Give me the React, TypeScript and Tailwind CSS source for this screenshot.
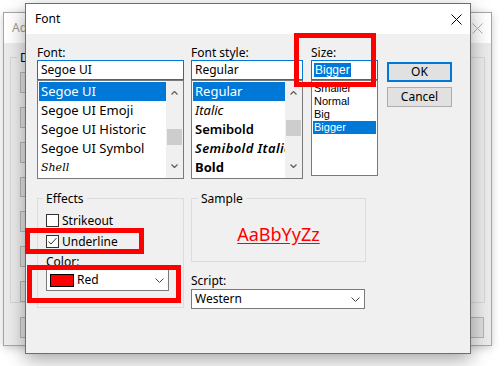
const UI = "font-['Noto_Sans',sans-serif]"

function ScrollArrow({ down }: { down?: boolean }) {
  return (
    <svg width="7" height="4" viewBox="0 0 7 4" className="block">
      <polyline
        points={down ? '0.5,0.5 3.5,3.5 6.5,0.5' : '0.5,3.5 3.5,0.5 6.5,3.5'}
        fill="none"
        stroke="#606060"
        strokeWidth="1.3"
      />
    </svg>
  )
}

function Chevron() {
  return (
    <svg width="9" height="5" viewBox="0 0 9 5" className="block">
      <polyline points="0.5,0.5 4.5,4.5 8.5,0.5" fill="none" stroke="#444" strokeWidth="1" />
    </svg>
  )
}

function CloseX({ color }: { color: string }) {
  return (
    <svg width="11" height="11" viewBox="0 0 11 11" className="block">
      <path d="M0.5 0.5 L10.5 10.5 M10.5 0.5 L0.5 10.5" stroke={color} strokeWidth="1" />
    </svg>
  )
}

function Scrollbar({ thumbTop }: { thumbTop: number }) {
  return (
    <div className="relative flex h-full w-[17px] shrink-0 flex-col items-center justify-between bg-[#f0f0f0] py-[10px]">
      <ScrollArrow />
      <div className="absolute left-[1px] h-[16px] w-[15px] bg-[#cdcdcd]" style={{ top: thumbTop }} />
      <ScrollArrow down />
    </div>
  )
}

function Checkbox({ checked, label }: { checked?: boolean; label: string }) {
  return (
    <div className="flex h-[13px] items-center gap-[3px]">
      <div className="h-[13px] w-[13px] border border-[#333] bg-white">
        {checked && (
          <svg width="11" height="11" viewBox="0 0 11 11" className="block">
            <polyline points="1.5,5.5 4,8 9.5,2" fill="none" stroke="#333" strokeWidth="1" />
          </svg>
        )}
      </div>
      <span className="leading-[15px]">{label}</span>
    </div>
  )
}

const FONTS = ['Segoe UI Emoji', 'Segoe UI Historic', 'Segoe UI Symbol']

export default function App() {
  return (
    <div className={`relative h-[366px] w-[504px] overflow-hidden bg-white text-[12px] text-black ${UI}`}>
      {/* window behind */}
      <div className="absolute left-[3px] top-[12px] flex h-[334px] w-[489px] flex-col border border-[#a6a6a6] bg-[#ebebeb] shadow-[0_2px_8px_rgba(0,0,0,0.2)]">
        <div className="flex h-[30px] items-center justify-between bg-white pl-[8px] pr-[8px] text-[#9c9c9c]">
          <span>Ad</span>
          <CloseX color="#b0b0b0" />
        </div>
        <div className="px-[6px] pt-[14px]">
          <div className="relative flex h-[246px] flex-col gap-[14px] border border-[#d6d6d6] pl-[9px] pt-[14px]">
            <span className="absolute -top-[8px] left-[6px] bg-[#ebebeb] px-[3px] leading-[15px]">D</span>
            {[0, 1, 2, 3, 4, 5, 6].map((i) => (
              <div key={i} className="h-[21px] w-[80px] border border-[#b3b3b3] bg-[#dedede]" />
            ))}
          </div>
        </div>
        <div className="flex justify-between pl-[16px] pr-[7px] pt-[14px]">
          <div className="h-[21px] w-[75px] border border-[#b3b3b3] bg-[#dedede]" />
          <div className="h-[21px] w-[75px] border border-[#b3b3b3] bg-[#dedede]" />
        </div>
      </div>

      {/* Font dialog */}
      <div className="absolute left-[25px] top-[3px] flex h-[351px] w-[446px] flex-col border border-[#6e6e6e] bg-[#f0f0f0] shadow-[0_6px_18px_rgba(0,0,0,0.35)]">
        <div className="flex h-[30px] shrink-0 items-center justify-between bg-white pl-[9px] pr-[8px]">
          <span>Font</span>
          <CloseX color="#000" />
        </div>

        <div className="pl-[11px] pt-[11px]">
          <div className="flex items-start">
            {/* Font */}
            <div className="w-[147px]">
              <div className="h-[15px] leading-[15px]">Font:</div>
              <div className="flex h-[20px] items-center border border-[#0078d7] bg-white pl-[3px]">Segoe UI</div>
              <div className="flex h-[99px] overflow-hidden border border-[#7a7a7a] bg-white">
                <div className="min-w-0 flex-1 overflow-hidden whitespace-nowrap py-[1px] pl-[1px] text-[13px]">
                  <div className="h-[19px] bg-[#0078d7] pl-[2px] leading-[19px] text-white">Segoe UI</div>
                  {FONTS.map((f) => (
                    <div key={f} className="h-[19px] pl-[2px] leading-[19px]">{f}</div>
                  ))}
                  <div className="h-[19px] pl-[2px] font-['DejaVu_Serif',serif] text-[11px] italic leading-[19px]">Shell</div>
                </div>
                <Scrollbar thumbTop={48} />
              </div>
            </div>

            {/* Font style */}
            <div className="ml-[7px] w-[112px]">
              <div className="h-[15px] leading-[15px]">Font style:</div>
              <div className="flex h-[20px] items-center border border-[#0078d7] bg-white pl-[3px]">Regular</div>
              <div className="flex h-[99px] overflow-hidden border border-[#7a7a7a] bg-white">
                <div className="min-w-0 flex-1 overflow-hidden whitespace-nowrap py-[1px] pl-[1px] text-[13px]">
                  <div className="h-[19px] bg-[#0078d7] pl-[2px] leading-[19px] text-white">Regular</div>
                  <div className="h-[19px] pl-[2px] italic leading-[19px]">Italic</div>
                  <div className="h-[19px] pl-[2px] font-semibold leading-[19px]">Semibold</div>
                  <div className="h-[19px] pl-[2px] font-semibold italic leading-[19px] tracking-[0.4px]">Semibold Italic</div>
                  <div className="h-[19px] pl-[2px] font-bold leading-[19px]">Bold</div>
                </div>
                <Scrollbar thumbTop={39} />
              </div>
            </div>

            {/* Size */}
            <div className="ml-[8px] w-[67px]">
              <div className="h-[15px] leading-[15px]">Size:</div>
              <div className="flex h-[20px] items-center border border-[#0078d7] bg-white pl-[2px] font-['Liberation_Sans',sans-serif]">
                <span className="bg-[#0078d7] px-[1px] leading-[14px] text-white">Bigger</span>
              </div>
              <div className="h-[96px] overflow-hidden border border-[#7a7a7a] bg-white pt-[1px] font-['Liberation_Sans',sans-serif] text-[11px]">
                <div className="h-[13px] pt-[3px]">
                  <div className="h-[10px] overflow-hidden pl-[2px]">
                    <div className="-mt-[3px] leading-[13px]">Smaller</div>
                  </div>
                </div>
                <div className="h-[13px] pl-[2px] leading-[13px]">Normal</div>
                <div className="h-[13px] pl-[2px] leading-[13px]">Big</div>
                <div className="mx-[1px] h-[13px] bg-[#0078d7] pl-[1px] leading-[13px] text-white">Bigger</div>
              </div>
            </div>

            {/* Buttons */}
            <div className="ml-[9px] flex w-[65px] flex-col gap-[5px] pt-[17px]">
              <button className="h-[20px] border-2 border-[#0078d7] bg-[#e1e1e1] leading-[16px]">OK</button>
              <button className="h-[20px] border border-[#adadad] bg-[#e1e1e1] leading-[18px]">Cancel</button>
            </div>
          </div>

          <div className="mt-[19px] flex items-start">
            {/* Effects */}
            <div className="relative h-[110px] w-[147px] border border-[#dcdcdc] px-[8px] pt-[15px]">
              <span className="absolute -top-[8px] left-[5px] bg-[#f0f0f0] px-[3px] leading-[15px]">Effects</span>
              <Checkbox label="Strikeout" />
              <div className="mt-[8px]">
                <Checkbox checked label="Underline" />
              </div>
              <div className="mt-[6px] h-[15px] leading-[15px]">Color:</div>
              <div className="flex h-[22px] w-[123px] items-center border border-[#7a7a7a] bg-white pl-[3px] pr-[4px]">
                <div className="h-[13px] w-[24px] border border-black bg-[#ff0000]" />
                <span className="ml-[3px] flex-1">Red</span>
                <Chevron />
              </div>
            </div>

            {/* Sample + Script */}
            <div className="ml-[7px] w-[175px]">
              <div className="relative flex h-[64px] items-center justify-center border border-[#dcdcdc] pt-[8px]">
                <span className="absolute -top-[8px] left-[6px] bg-[#f0f0f0] px-[3px] leading-[15px]">Sample</span>
                <span className="text-[18px] leading-[22px] text-[#ff0000] underline underline-offset-[2px]">AaBbYyZz</span>
              </div>
              <div className="mt-[11px] h-[15px] leading-[15px]">Script:</div>
              <div className="mt-[1px] flex h-[20px] w-[174px] items-center justify-between border border-[#7a7a7a] bg-white pl-[3px] pr-[4px]">
                <span>Western</span>
                <Chevron />
              </div>
            </div>
          </div>
        </div>
      </div>

      {/* annotations */}
      <div className="absolute left-[294px] top-[33px] h-[54px] w-[82px] border-[5px] border-[#ff0000]" />
      <div className="absolute left-[25px] top-[228px] h-[26px] w-[119px] border-[5px] border-[#ff0000]" />
      <div className="absolute left-[27px] top-[265px] h-[38px] w-[154px] border-[5px] border-[#ff0000]" />
    </div>
  )
}
